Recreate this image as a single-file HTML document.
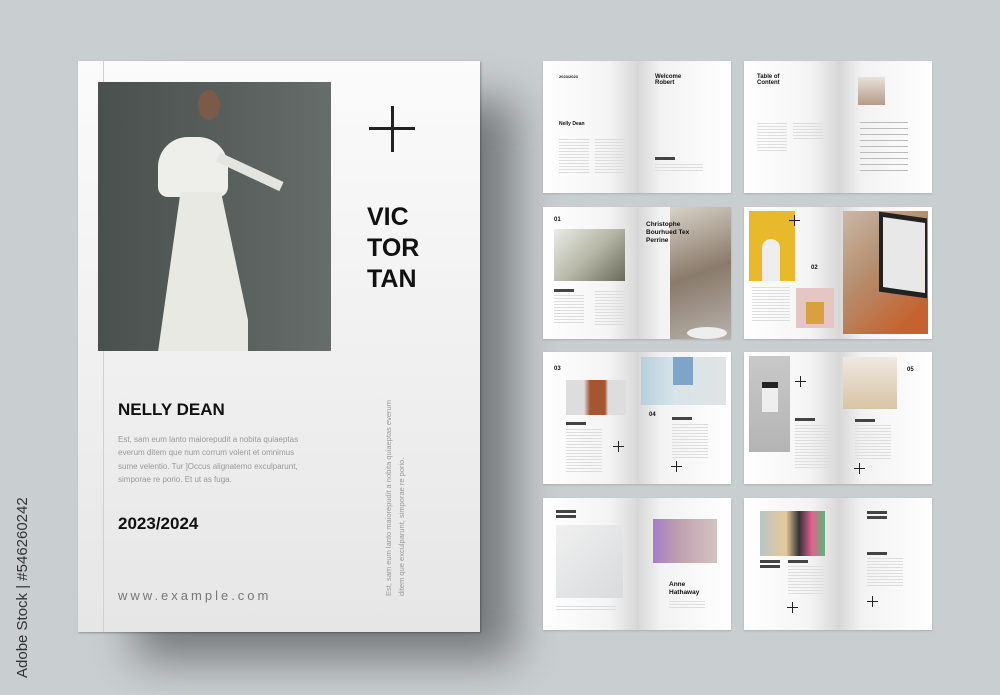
<!DOCTYPE html><html><head><style>
*{margin:0;padding:0;box-sizing:border-box}
body{width:1000px;height:695px;background:#c9ced1;position:relative;overflow:hidden;font-family:"Liberation Sans",sans-serif}
.a{position:absolute}
.sp{position:absolute;width:188px;height:132px;background:#fff;box-shadow:0 1px 2px rgba(0,0,0,.15)}
.sp .l{position:absolute;left:0;top:0;width:94px;height:132px;background:linear-gradient(90deg,#fff 0%,#f4f4f4 70%,#d9d9d9 100%)}
.sp .r{position:absolute;left:94px;top:0;width:94px;height:132px;background:linear-gradient(90deg,#d6d6d6 0%,#f2f2f2 25%,#fff 100%)}
.t{position:absolute;font-weight:bold;color:#111;font-size:6px;line-height:6px}
.tag{position:absolute;width:20px;height:3px;background:#444}
.pl{position:absolute;width:11px;height:11px}
.pl:before{content:"";position:absolute;left:5px;top:0;width:1px;height:11px;background:#222}
.pl:after{content:"";position:absolute;top:5px;left:0;height:1px;width:11px;background:#222}
.txt{position:absolute;background:repeating-linear-gradient(#ddd 0 1px,transparent 1px 3px)}
</style></head><body>
<!-- shadow -->
<div class="a" style="left:135px;top:100px;width:380px;height:560px;background:#6c7073;filter:blur(22px);opacity:.9"></div>
<!-- cover -->
<div class="a" style="left:78px;top:61px;width:402px;height:571px;background:linear-gradient(180deg,#fbfbfb,#e6e6e6);box-shadow:1px 1px 2px rgba(0,0,0,.3)">
 <div class="a" style="left:25px;top:0;width:1px;height:571px;background:#d0d0d0"></div>
 <div class="a" style="left:20px;top:21px;width:233px;height:269px;background:linear-gradient(90deg,#4a504e,#5a605e 60%,#676d6b);overflow:hidden">
  <div class="a" style="left:100px;top:8px;width:22px;height:30px;border-radius:50%;background:#7a5a48"></div>
  <div class="a" style="left:60px;top:55px;width:70px;height:60px;background:#eeeeea;border-radius:30px 30px 10px 10px"></div>
  <div class="a" style="left:60px;top:110px;width:90px;height:160px;background:#e9e9e4;clip-path:polygon(25% 0,70% 0,100% 80%,120% 100%,0 100%)"></div>
  <div class="a" style="left:120px;top:70px;width:70px;height:10px;background:#e5e5e0;transform:rotate(25deg);transform-origin:left"></div>
 </div>
 <div class="a" style="left:291px;top:66px;width:46px;height:3px;background:#222"></div>
 <div class="a" style="left:313px;top:45px;width:3px;height:46px;background:#222"></div>
 <div class="a" style="left:289px;top:141px;font-size:25px;font-weight:bold;line-height:31px;color:#111">VIC<br>TOR<br>TAN</div>
 <div class="a" style="left:40px;top:339px;font-size:17px;font-weight:bold;color:#111">NELLY DEAN</div>
 <div class="a" style="left:40px;top:372px;font-size:8px;line-height:13.3px;color:#999;width:195px">Est, sam eum lanto maiorepudit a nobita quiaeptas everum ditem que num corrum volent et omnimus sume velentio. Tur ]Occus alignatemo exculparunt, simporae re porio. Et ut as fuga.</div>
 <div class="a" style="left:40px;top:453px;font-size:17px;font-weight:bold;color:#111">2023/2024</div>
 <div class="a" style="left:40px;top:527px;font-size:13px;letter-spacing:3px;color:#777">www.example.com</div>
 <div class="a" style="left:304px;top:535px;font-size:7.5px;line-height:13px;color:#999;white-space:nowrap;transform:rotate(-90deg);transform-origin:0 0">Est, sam eum lanto maiorepudit a nobita quiaeptas everum<br>ditem que exculparunt, simporae re porio.</div>
</div>
<div class="a" style="left:14px;top:678px;font-size:15px;color:#333;white-space:nowrap;transform:rotate(-90deg);transform-origin:0 0">Adobe Stock | #546260242</div>

<!-- row1 -->
<div class="sp" style="left:543px;top:61px"><div class="l"></div><div class="r"></div>
 <div class="t" style="left:16px;top:13px;font-size:4px">2023/2023</div>
 <div class="t" style="left:16px;top:60px;font-size:5px">Nelly Dean</div>
 <div class="txt" style="left:16px;top:78px;width:30px;height:36px"></div><div class="txt" style="left:52px;top:78px;width:30px;height:36px"></div>
 <div class="t" style="left:112px;top:13px">Welcome<br>Robert</div>
 <div class="tag" style="left:112px;top:96px"></div><div class="txt" style="left:112px;top:103px;width:48px;height:8px"></div>
</div>
<div class="sp" style="left:744px;top:61px"><div class="l"></div><div class="r"></div>
 <div class="t" style="left:13px;top:13px">Table of<br>Content</div>
 <div class="txt" style="left:13px;top:62px;width:30px;height:30px"></div><div class="txt" style="left:49px;top:62px;width:30px;height:18px"></div>
 <div class="a" style="left:114px;top:16px;width:27px;height:28px;background:linear-gradient(#e8e2dc,#b59a86)"></div>
 <div class="txt" style="left:116px;top:61px;width:48px;height:54px;background:repeating-linear-gradient(#bbb 0 1px,transparent 1px 6px)"></div>
</div>
<!-- row2 -->
<div class="sp" style="left:543px;top:207px"><div class="l"></div><div class="r"></div>
 <div class="t" style="left:11px;top:10px">01</div>
 <div class="a" style="left:11px;top:22px;width:71px;height:52px;background:linear-gradient(135deg,#e9ece6,#b8b8a8 50%,#6a6a5a)"></div>
 <div class="tag" style="left:11px;top:82px"></div><div class="txt" style="left:11px;top:88px;width:30px;height:30px"></div><div class="txt" style="left:52px;top:84px;width:30px;height:36px"></div>
 <div class="a" style="left:127px;top:0;width:61px;height:132px;background:linear-gradient(160deg,#d8d2c8,#8a7a6a 50%,#b7b2ac)"></div>
 <div class="a" style="left:144px;top:120px;width:40px;height:12px;background:#eee;border-radius:50%"></div>
 <div class="t" style="left:103px;top:14px;font-size:6.5px;line-height:8px">Christophe<br>Bourhued Tex<br>Perrine</div>
</div>
<div class="sp" style="left:744px;top:207px"><div class="l"></div><div class="r"></div>
 <div class="a" style="left:5px;top:4px;width:46px;height:70px;background:#e8b92a"></div>
 <div class="a" style="left:18px;top:32px;width:18px;height:42px;background:#eee;border-radius:9px 9px 0 0"></div>
 <div class="pl" style="left:45px;top:8px"></div>
 <div class="t" style="left:67px;top:58px">02</div>
 <div class="a" style="left:52px;top:81px;width:38px;height:40px;background:#e6c6c4"></div>
 <div class="a" style="left:62px;top:95px;width:18px;height:22px;background:#d9a040"></div>
 <div class="txt" style="left:8px;top:80px;width:38px;height:36px"></div>
 <div class="a" style="left:99px;top:4px;width:85px;height:123px;background:linear-gradient(135deg,#cbb8a8,#b58f70 40%,#c5622e 85%)"></div>
 <div class="a" style="left:135px;top:8px;width:48px;height:80px;background:#222;transform:skewY(8deg)"></div>
 <div class="a" style="left:139px;top:13px;width:42px;height:70px;background:#e8e8e8;transform:skewY(8deg)"></div>
</div>
<!-- row3 -->
<div class="sp" style="left:543px;top:352px"><div class="l"></div><div class="r"></div>
 <div class="t" style="left:11px;top:14px">03</div>
 <div class="a" style="left:23px;top:28px;width:60px;height:35px;background:linear-gradient(90deg,#ddd 30%,#a55530 40%,#a55530 65%,#ddd 70%)"></div>
 <div class="tag" style="left:23px;top:70px"></div><div class="txt" style="left:23px;top:77px;width:36px;height:44px"></div>
 <div class="pl" style="left:70px;top:89px"></div>
 <div class="a" style="left:98px;top:5px;width:85px;height:48px;background:linear-gradient(90deg,#b8d0dc,#d8e4ea 40%,#e0e4e4)"></div>
 <div class="a" style="left:130px;top:5px;width:20px;height:28px;background:#7ea4c8"></div>
 <div class="t" style="left:106px;top:60px">04</div>
 <div class="tag" style="left:129px;top:65px"></div><div class="txt" style="left:129px;top:72px;width:36px;height:36px"></div>
 <div class="pl" style="left:128px;top:109px"></div>
</div>
<div class="sp" style="left:744px;top:352px"><div class="l"></div><div class="r"></div>
 <div class="a" style="left:5px;top:4px;width:41px;height:96px;background:linear-gradient(#c8c8c8,#b4b4b4)"></div>
 <div class="a" style="left:18px;top:30px;width:16px;height:30px;background:#eee;border-top:6px solid #222"></div>
 <div class="pl" style="left:51px;top:24px"></div>
 <div class="tag" style="left:51px;top:66px"></div><div class="txt" style="left:51px;top:73px;width:36px;height:44px"></div>
 <div class="a" style="left:99px;top:5px;width:54px;height:52px;background:linear-gradient(#efe8e0,#d8c4a4)"></div>
 <div class="t" style="left:163px;top:15px">05</div>
 <div class="tag" style="left:111px;top:67px"></div><div class="txt" style="left:111px;top:73px;width:36px;height:36px"></div>
 <div class="pl" style="left:110px;top:111px"></div>
</div>
<!-- row4 -->
<div class="sp" style="left:543px;top:498px"><div class="l"></div><div class="r"></div>
 <div class="tag" style="left:13px;top:12px"></div><div class="tag" style="left:13px;top:17px"></div>
 <div class="a" style="left:13px;top:27px;width:67px;height:73px;background:linear-gradient(135deg,#f0f0f0,#d8dadc)"></div>
 <div class="txt" style="left:13px;top:108px;width:60px;height:6px"></div>
 <div class="a" style="left:110px;top:21px;width:64px;height:44px;background:linear-gradient(90deg,#a57cc8,#c0a0b0 40%,#d0c4c0)"></div>
 <div class="t" style="left:126px;top:83px;font-size:6.5px;line-height:8px">Anne<br>Hathaway</div>
 <div class="txt" style="left:126px;top:103px;width:36px;height:9px"></div>
</div>
<div class="sp" style="left:744px;top:498px"><div class="l"></div><div class="r"></div>
 <div class="a" style="left:16px;top:13px;width:65px;height:45px;background:linear-gradient(90deg,#b8c6c6,#e6c89a 40%,#333 60%,#e46090 80%,#5ab878)"></div>
 <div class="tag" style="left:16px;top:62px"></div><div class="tag" style="left:16px;top:67px"></div><div class="tag" style="left:44px;top:62px"></div>
 <div class="txt" style="left:44px;top:68px;width:36px;height:30px"></div>
 <div class="pl" style="left:43px;top:104px"></div>
 <div class="tag" style="left:123px;top:13px"></div><div class="tag" style="left:123px;top:18px"></div>
 <div class="tag" style="left:123px;top:54px"></div><div class="txt" style="left:123px;top:60px;width:36px;height:28px"></div>
 <div class="pl" style="left:123px;top:98px"></div>
</div>
</body></html>
